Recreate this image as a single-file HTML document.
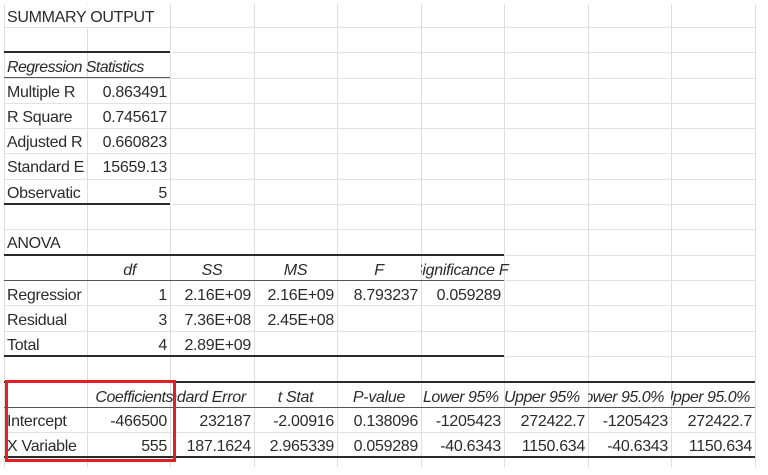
<!DOCTYPE html>
<html><head><meta charset="utf-8"><style>
html,body{margin:0;padding:0;background:#fff;}
body{width:768px;height:475px;position:relative;overflow:hidden;font-family:"Liberation Sans",sans-serif;font-size:16px;color:#2b2b2b;}
.v{position:absolute;top:4px;height:463px;width:1px;background:#dedede;}
.h{position:absolute;left:4px;width:751px;height:1px;background:#e2e2e2;}
.b{position:absolute;background:#2a2a2a;}
.c{position:absolute;height:25px;line-height:29px;white-space:nowrap;overflow:hidden;padding:0 3px;box-sizing:border-box;letter-spacing:-0.3px;}
.r{text-align:right;}.m{text-align:center;}.i{font-style:italic;}
</style></head><body>
<div class="v" style="left:4px"></div><div class="v" style="left:87px"></div><div class="v" style="left:170px"></div><div class="v" style="left:254px"></div><div class="v" style="left:337px"></div><div class="v" style="left:421px"></div><div class="v" style="left:504px"></div><div class="v" style="left:588px"></div><div class="v" style="left:671px"></div><div class="v" style="left:755px"></div>
<div class="h" style="top:27px"></div><div class="h" style="top:52px"></div><div class="h" style="top:78px"></div><div class="h" style="top:103px"></div><div class="h" style="top:128px"></div><div class="h" style="top:153px"></div><div class="h" style="top:179px"></div><div class="h" style="top:204px"></div><div class="h" style="top:229px"></div><div class="h" style="top:255px"></div><div class="h" style="top:280px"></div><div class="h" style="top:305px"></div><div class="h" style="top:331px"></div><div class="h" style="top:356px"></div><div class="h" style="top:381px"></div><div class="h" style="top:407px"></div><div class="h" style="top:432px"></div><div class="h" style="top:457px"></div>
<div style="position:absolute;left:5px;top:5px;width:164px;height:22px;background:#fff"></div>
<div style="position:absolute;left:5px;top:230px;width:81px;height:24px;background:#fff"></div>
<div class="b" style="left:4px;top:51px;width:166px;height:2px"></div>
<div class="b" style="left:4px;top:77px;width:166px;height:1px;background:#555"></div>
<div class="b" style="left:4px;top:203px;width:166px;height:2px"></div>
<div class="b" style="left:4px;top:254px;width:500px;height:2px"></div>
<div class="b" style="left:4px;top:280px;width:500px;height:1px;background:#555"></div>
<div class="b" style="left:4px;top:355px;width:500px;height:2px"></div>
<div class="b" style="left:4px;top:381px;width:751px;height:2px"></div>
<div class="b" style="left:4px;top:407px;width:751px;height:1px;background:#555"></div>
<div class="b" style="left:4px;top:456px;width:751px;height:2px"></div>

<div class="c" style="left:4px;top:3px;width:200px">SUMMARY OUTPUT</div>
<div class="c i" style="left:4px;top:53px;width:166px;letter-spacing:-0.6px">Regression Statistics</div>
<div class="c" style="left:4px;top:78px;width:83px">Multiple R</div><div class="c r" style="left:87px;top:78px;width:83px">0.863491</div>
<div class="c" style="left:4px;top:103px;width:83px">R Square</div><div class="c r" style="left:87px;top:103px;width:83px">0.745617</div>
<div class="c" style="left:4px;top:128px;width:83px">Adjusted R</div><div class="c r" style="left:87px;top:128px;width:83px">0.660823</div>
<div class="c" style="left:4px;top:153px;width:83px">Standard E</div><div class="c r" style="left:87px;top:153px;width:83px">15659.13</div>
<div class="c" style="left:4px;top:179px;width:83px">Observatic</div><div class="c r" style="left:87px;top:179px;width:83px">5</div>

<div class="c" style="left:4px;top:229px;width:83px">ANOVA</div>
<div class="c i" style="left:87px;top:256px;width:83px;text-align:right;padding-right:34px">df</div>
<div class="c m i" style="left:170px;top:256px;width:84px">SS</div>
<div class="c m i" style="left:254px;top:256px;width:83px">MS</div>
<div class="c m i" style="left:337px;top:256px;width:84px">F</div>
<div class="c i" style="left:421px;top:256px;width:100px;padding:0"><span style="position:relative;left:-9px">Significance F</span></div>
<div class="c" style="left:4px;top:281px;width:83px">Regressior</div><div class="c r" style="left:87px;top:281px;width:83px">1</div><div class="c r" style="left:170px;top:281px;width:84px">2.16E+09</div><div class="c r" style="left:254px;top:281px;width:83px">2.16E+09</div><div class="c r" style="left:337px;top:281px;width:84px">8.793237</div><div class="c r" style="left:421px;top:281px;width:83px">0.059289</div>
<div class="c" style="left:4px;top:306px;width:83px">Residual</div><div class="c r" style="left:87px;top:306px;width:83px">3</div><div class="c r" style="left:170px;top:306px;width:84px">7.36E+08</div><div class="c r" style="left:254px;top:306px;width:83px">2.45E+08</div>
<div class="c" style="left:4px;top:331px;width:83px">Total</div><div class="c r" style="left:87px;top:331px;width:83px">4</div><div class="c r" style="left:170px;top:331px;width:84px">2.89E+09</div>

<div class="c i r" style="left:60px;top:383px;width:113px;padding:0;letter-spacing:-0.5px">Coefficients</div>
<div class="c m i" style="left:173px;top:383px;width:81px;padding:0"><span style="display:inline-block;margin-left:-36px">Standard Error</span></div>
<div class="c m i" style="left:254px;top:383px;width:83px">t Stat</div>
<div class="c m i" style="left:337px;top:383px;width:84px">P-value</div>
<div class="c i" style="left:421px;top:383px;width:83px;padding:0 0 0 2px;letter-spacing:-0.5px">Lower 95%</div>
<div class="c i" style="left:504px;top:383px;width:84px;padding:0;letter-spacing:-0.5px">Upper 95%</div>
<div class="c i" style="left:588px;top:383px;width:83px;padding:0;letter-spacing:-0.5px"><span style="display:inline-block;margin-left:-12px">Lower 95.0%</span></div>
<div class="c i" style="left:671px;top:383px;width:90px;padding:0;letter-spacing:-0.5px"><span style="display:inline-block;margin-left:-9px">Upper 95.0%</span></div>
<div class="c" style="left:4px;top:407px;width:83px">Intercept</div><div class="c r" style="left:87px;top:407px;width:83px">-466500</div><div class="c r" style="left:170px;top:407px;width:84px">232187</div><div class="c r" style="left:254px;top:407px;width:83px">-2.00916</div><div class="c r" style="left:337px;top:407px;width:84px">0.138096</div><div class="c r" style="left:421px;top:407px;width:83px">-1205423</div><div class="c r" style="left:504px;top:407px;width:84px">272422.7</div><div class="c r" style="left:588px;top:407px;width:83px">-1205423</div><div class="c r" style="left:671px;top:407px;width:84px">272422.7</div>
<div class="c" style="left:4px;top:432px;width:83px">X Variable</div><div class="c r" style="left:87px;top:432px;width:83px">555</div><div class="c r" style="left:170px;top:432px;width:84px">187.1624</div><div class="c r" style="left:254px;top:432px;width:83px">2.965339</div><div class="c r" style="left:337px;top:432px;width:84px">0.059289</div><div class="c r" style="left:421px;top:432px;width:83px">-40.6343</div><div class="c r" style="left:504px;top:432px;width:84px">1150.634</div><div class="c r" style="left:588px;top:432px;width:83px">-40.6343</div><div class="c r" style="left:671px;top:432px;width:84px">1150.634</div>

<div style="position:absolute;left:5px;top:380px;width:165px;height:76px;border:3px solid #e41e26;"></div>
</body></html>
